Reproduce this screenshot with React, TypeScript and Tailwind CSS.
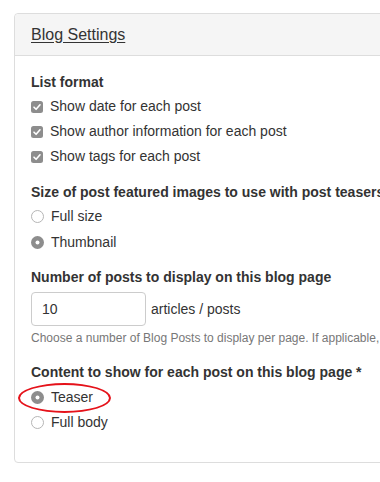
import React from "react";

function Check() {
  return (
    <svg width="12" height="12" viewBox="0 0 12 12" className="shrink-0">
      <rect x="0" y="0" width="12" height="12" rx="2.5" fill="#8d8d8d" />
      <path d="M3 6.2 L5.1 8.3 L9 3.8" stroke="#fff" strokeWidth="1.6" fill="none" strokeLinecap="round" strokeLinejoin="round" />
    </svg>
  );
}

function Radio({ on }: { on?: boolean }) {
  return (
    <svg width="13" height="13" viewBox="0 0 13 13" className="shrink-0">
      {on ? (
        <>
          <circle cx="6.5" cy="6.5" r="6.5" fill="#8d8d8d" />
          <circle cx="6.5" cy="6.5" r="2" fill="#fff" />
        </>
      ) : (
        <circle cx="6.5" cy="6.5" r="6" fill="#fff" stroke="#b5b5b5" strokeWidth="1" />
      )}
    </svg>
  );
}

function Row({ children }: { children: React.ReactNode }) {
  return <div className="flex h-[25px] items-center gap-[7px] whitespace-nowrap">{children}</div>;
}

export default function App() {
  return (
    <div
      className="w-[380px] h-[482px] overflow-hidden bg-white text-[#333]"
      style={{ fontFamily: '"Liberation Sans", Arial, sans-serif' }}
    >
      <div className="ml-[14px] mt-[13px] w-[420px] rounded-[4px] border border-[#dddddd]">
        <div className="rounded-t-[4px] border-b border-[#dddddd] bg-[#f5f5f5] px-[16px] py-[11px] text-[16px] leading-[19px]">
          <span className="underline underline-offset-[2px]">Blog Settings</span>
        </div>
        <div className="px-[16px] pt-[16px] pb-[27px] text-[14px]">
          <div className="text-[14px] font-bold leading-[20px]">List format</div>
          <div className="mt-[2px]">
            <Row><Check /><span>Show date for each post</span></Row>
            <Row><Check /><span>Show author information for each post</span></Row>
            <Row><Check /><span>Show tags for each post</span></Row>
          </div>

          <div className="mt-[13px] whitespace-nowrap text-[14px] font-bold leading-[20px]">
            Size of post featured images to use with post teasers
          </div>
          <div className="mt-[2px]">
            <Row><Radio /><span>Full size</span></Row>
            <div className="mt-[1px]">
              <Row><Radio on /><span>Thumbnail</span></Row>
            </div>
          </div>

          <div className="mt-[12px] text-[14px] font-bold leading-[20px]">
            Number of posts to display on this blog page
          </div>
          <div className="mt-[5px] flex items-center gap-[5px]">
            <div className="flex h-[34px] w-[115px] items-center rounded-[4px] border border-[#cccccc] pl-[10px] text-[14px]">
              10
            </div>
            <span className="text-[14px]">articles / posts</span>
          </div>
          <div className="mt-[4px] whitespace-nowrap text-[12px] leading-[17px] text-[#777]">
            Choose a number of Blog Posts to display per page. If applicable, older posts will be paginated.
          </div>

          <div className="mt-[15px] text-[14px] font-bold leading-[20px]">
            Content to show for each post on this blog page *
          </div>
          <div className="mt-[3px]">
            <div className="relative">
              <Row><Radio on /><span>Teaser</span></Row>
              <div className="pointer-events-none absolute left-[-13px] top-[-2px] h-[30px] w-[93px] rounded-[50%] border-[2.5px] border-[#e5121a]" />
            </div>
            <Row><Radio /><span>Full body</span></Row>
          </div>
        </div>
      </div>
    </div>
  );
}
